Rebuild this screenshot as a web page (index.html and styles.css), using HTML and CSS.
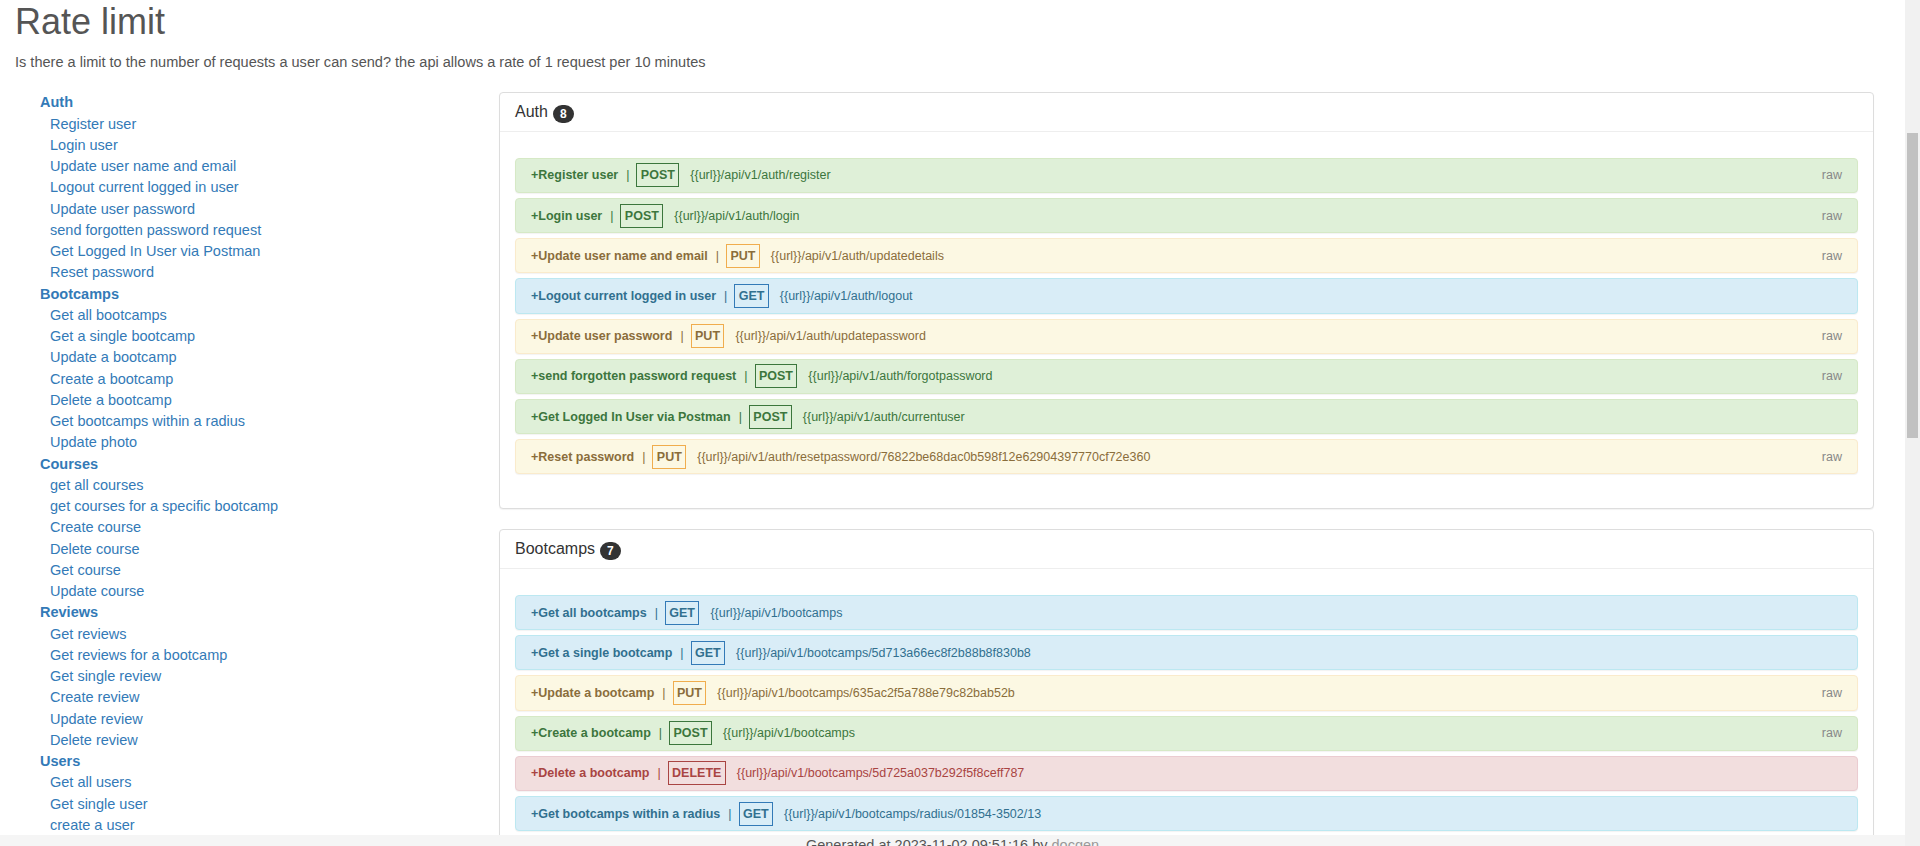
FILE: index.html
```html
<!DOCTYPE html>
<html lang="en">
<head>
<meta charset="utf-8">
<title>Rate limit</title>
<link rel="stylesheet" href="styles.css">
</head>
<body>
<div class="page">
  <h1 class="title">Rate limit</h1>
  <p class="desc">Is there a limit to the number of requests a user can send? the api allows a rate of 1 request per 10 minutes</p>

  <div class="layout">
    <nav class="sidebar">
      <div class="nav-group">
        <a class="nav-title">Auth</a>
        <a class="nav-item">Register user</a>
        <a class="nav-item">Login user</a>
        <a class="nav-item">Update user name and email</a>
        <a class="nav-item">Logout current logged in user</a>
        <a class="nav-item">Update user password</a>
        <a class="nav-item">send forgotten password request</a>
        <a class="nav-item">Get Logged In User via Postman</a>
        <a class="nav-item">Reset password</a>
      </div>
      <div class="nav-group">
        <a class="nav-title">Bootcamps</a>
        <a class="nav-item">Get all bootcamps</a>
        <a class="nav-item">Get a single bootcamp</a>
        <a class="nav-item">Update a bootcamp</a>
        <a class="nav-item">Create a bootcamp</a>
        <a class="nav-item">Delete a bootcamp</a>
        <a class="nav-item">Get bootcamps within a radius</a>
        <a class="nav-item">Update photo</a>
      </div>
      <div class="nav-group">
        <a class="nav-title">Courses</a>
        <a class="nav-item">get all courses</a>
        <a class="nav-item">get courses for a specific bootcamp</a>
        <a class="nav-item">Create course</a>
        <a class="nav-item">Delete course</a>
        <a class="nav-item">Get course</a>
        <a class="nav-item">Update course</a>
      </div>
      <div class="nav-group">
        <a class="nav-title">Reviews</a>
        <a class="nav-item">Get reviews</a>
        <a class="nav-item">Get reviews for a bootcamp</a>
        <a class="nav-item">Get single review</a>
        <a class="nav-item">Create review</a>
        <a class="nav-item">Update review</a>
        <a class="nav-item">Delete review</a>
      </div>
      <div class="nav-group">
        <a class="nav-title">Users</a>
        <a class="nav-item">Get all users</a>
        <a class="nav-item">Get single user</a>
        <a class="nav-item">create a user</a>
        <a class="nav-item">Update user</a>
        <a class="nav-item">Delete user</a>
      </div>
    </nav>

    <main class="main">
      <section class="panel">
        <div class="panel-heading"><h3 class="panel-title">Auth<span class="badge">8</span></h3></div>
        <div class="panel-body">
          <div class="req success"><b>+Register user</b><span class="sep">|</span><span class="method post">POST</span><span class="url">{{url}}/api/v1/auth/register</span><span class="raw">raw</span></div>
          <div class="req success"><b>+Login user</b><span class="sep">|</span><span class="method post">POST</span><span class="url">{{url}}/api/v1/auth/login</span><span class="raw">raw</span></div>
          <div class="req warning"><b>+Update user name and email</b><span class="sep">|</span><span class="method put">PUT</span><span class="url">{{url}}/api/v1/auth/updatedetails</span><span class="raw">raw</span></div>
          <div class="req info"><b>+Logout current logged in user</b><span class="sep">|</span><span class="method get">GET</span><span class="url">{{url}}/api/v1/auth/logout</span></div>
          <div class="req warning"><b>+Update user password</b><span class="sep">|</span><span class="method put">PUT</span><span class="url">{{url}}/api/v1/auth/updatepassword</span><span class="raw">raw</span></div>
          <div class="req success"><b>+send forgotten password request</b><span class="sep">|</span><span class="method post">POST</span><span class="url">{{url}}/api/v1/auth/forgotpassword</span><span class="raw">raw</span></div>
          <div class="req success"><b>+Get Logged In User via Postman</b><span class="sep">|</span><span class="method post">POST</span><span class="url">{{url}}/api/v1/auth/currentuser</span></div>
          <div class="req warning"><b>+Reset password</b><span class="sep">|</span><span class="method put">PUT</span><span class="url">{{url}}/api/v1/auth/resetpassword/76822be68dac0b598f12e62904397770cf72e360</span><span class="raw">raw</span></div>
        </div>
      </section>

      <section class="panel">
        <div class="panel-heading"><h3 class="panel-title">Bootcamps<span class="badge">7</span></h3></div>
        <div class="panel-body">
          <div class="req info"><b>+Get all bootcamps</b><span class="sep">|</span><span class="method get">GET</span><span class="url">{{url}}/api/v1/bootcamps</span></div>
          <div class="req info"><b>+Get a single bootcamp</b><span class="sep">|</span><span class="method get">GET</span><span class="url">{{url}}/api/v1/bootcamps/5d713a66ec8f2b88b8f830b8</span></div>
          <div class="req warning"><b>+Update a bootcamp</b><span class="sep">|</span><span class="method put">PUT</span><span class="url">{{url}}/api/v1/bootcamps/635ac2f5a788e79c82bab52b</span><span class="raw">raw</span></div>
          <div class="req success"><b>+Create a bootcamp</b><span class="sep">|</span><span class="method post">POST</span><span class="url">{{url}}/api/v1/bootcamps</span><span class="raw">raw</span></div>
          <div class="req danger"><b>+Delete a bootcamp</b><span class="sep">|</span><span class="method delete">DELETE</span><span class="url">{{url}}/api/v1/bootcamps/5d725a037b292f5f8ceff787</span></div>
          <div class="req info"><b>+Get bootcamps within a radius</b><span class="sep">|</span><span class="method get">GET</span><span class="url">{{url}}/api/v1/bootcamps/radius/01854-3502/13</span></div>
          <div class="req warning"><b>+Update photo</b><span class="sep">|</span><span class="method put">PUT</span><span class="url">{{url}}/api/v1/bootcamps/5d725a1b7b292f5f8ceff788/photo</span></div>
        </div>
      </section>

      <section class="panel">
        <div class="panel-heading"><h3 class="panel-title">Courses<span class="badge">6</span></h3></div>
        <div class="panel-body">
          <div class="req info"><b>+get all courses</b><span class="sep">|</span><span class="method get">GET</span><span class="url">{{url}}/api/v1/courses</span></div>
          <div class="req info"><b>+get courses for a specific bootcamp</b><span class="sep">|</span><span class="method get">GET</span><span class="url">{{url}}/api/v1/bootcamps/5d725a1b7b292f5f8ceff788/courses</span></div>
          <div class="req success"><b>+Create course</b><span class="sep">|</span><span class="method post">POST</span><span class="url">{{url}}/api/v1/bootcamps/5d725a1b7b292f5f8ceff788/courses</span><span class="raw">raw</span></div>
          <div class="req danger"><b>+Delete course</b><span class="sep">|</span><span class="method delete">DELETE</span><span class="url">{{url}}/api/v1/courses/5d725cb9c4ded7bcb480eaa1</span></div>
          <div class="req info"><b>+Get course</b><span class="sep">|</span><span class="method get">GET</span><span class="url">{{url}}/api/v1/courses/5d725cb9c4ded7bcb480eaa1</span></div>
          <div class="req warning"><b>+Update course</b><span class="sep">|</span><span class="method put">PUT</span><span class="url">{{url}}/api/v1/courses/5d725cb9c4ded7bcb480eaa1</span><span class="raw">raw</span></div>
        </div>
      </section>

      <section class="panel">
        <div class="panel-heading"><h3 class="panel-title">Reviews<span class="badge">6</span></h3></div>
        <div class="panel-body">
          <div class="req info"><b>+Get reviews</b><span class="sep">|</span><span class="method get">GET</span><span class="url">{{url}}/api/v1/reviews</span></div>
          <div class="req info"><b>+Get reviews for a bootcamp</b><span class="sep">|</span><span class="method get">GET</span><span class="url">{{url}}/api/v1/bootcamps/5d725a1b7b292f5f8ceff788/reviews</span></div>
          <div class="req info"><b>+Get single review</b><span class="sep">|</span><span class="method get">GET</span><span class="url">{{url}}/api/v1/reviews/5d7a514b5d2c12c7449be020</span></div>
          <div class="req success"><b>+Create review</b><span class="sep">|</span><span class="method post">POST</span><span class="url">{{url}}/api/v1/bootcamps/5d725a1b7b292f5f8ceff788/reviews</span><span class="raw">raw</span></div>
          <div class="req warning"><b>+Update review</b><span class="sep">|</span><span class="method put">PUT</span><span class="url">{{url}}/api/v1/reviews/5d7a514b5d2c12c7449be020</span><span class="raw">raw</span></div>
          <div class="req danger"><b>+Delete review</b><span class="sep">|</span><span class="method delete">DELETE</span><span class="url">{{url}}/api/v1/reviews/5d7a514b5d2c12c7449be020</span></div>
        </div>
      </section>

      <section class="panel">
        <div class="panel-heading"><h3 class="panel-title">Users<span class="badge">5</span></h3></div>
        <div class="panel-body">
          <div class="req info"><b>+Get all users</b><span class="sep">|</span><span class="method get">GET</span><span class="url">{{url}}/api/v1/users</span></div>
          <div class="req info"><b>+Get single user</b><span class="sep">|</span><span class="method get">GET</span><span class="url">{{url}}/api/v1/users/5c8a1d5b0190b214360dc031</span></div>
          <div class="req success"><b>+create a user</b><span class="sep">|</span><span class="method post">POST</span><span class="url">{{url}}/api/v1/users</span><span class="raw">raw</span></div>
          <div class="req warning"><b>+Update user</b><span class="sep">|</span><span class="method put">PUT</span><span class="url">{{url}}/api/v1/users/5c8a1d5b0190b214360dc031</span><span class="raw">raw</span></div>
          <div class="req danger"><b>+Delete user</b><span class="sep">|</span><span class="method delete">DELETE</span><span class="url">{{url}}/api/v1/users/5c8a1d5b0190b214360dc031</span></div>
        </div>
      </section>
    </main>
  </div>
</div>

<footer class="footer">Generated at 2023-11-02 09:51:16 by <a class="footer-link">docgen</a></footer>

<div class="scrollbar" aria-hidden="true"><div class="scrollbar-thumb"></div></div>
</body>
</html>
```

FILE: styles.css
```css
html, body {
  margin: 0;
  background: #fff;
}

body {
  font-family: "Liberation Sans", Arial, Helvetica, sans-serif;
  font-size: 14.5px;
  line-height: 20.7px;
  color: #333;
}

.page {
  padding: 0 30px 0 15px;
}

.title {
  margin: 2px 0 10px;
  font-size: 36px;
  font-weight: 400;
  line-height: 1.1;
  color: #555;
}

.desc {
  margin: 0;
  font-size: 14.56px;
  color: #555;
}

.layout {
  display: grid;
  grid-template-columns: 484px 1fr;
  margin-top: 20px;
}

.sidebar {
  padding-left: 25px;
}

.nav-group {
  display: flex;
  flex-direction: column;
  align-items: flex-start;
}

.nav-title,
.nav-item {
  color: #337ab7;
  line-height: 21.25px;
  text-decoration: none;
}

.nav-title {
  font-weight: bold;
}

.nav-item {
  padding-left: 10px;
}

.main {
  margin-right: 16px;
  min-width: 0;
}

.panel {
  background: #fff;
  border: 1px solid #ddd;
  border-radius: 4px;
  box-shadow: 0 1px 1px rgba(0, 0, 0, 0.05);
  margin-bottom: 20px;
}

.panel-heading {
  padding: 10px 15px;
  border-bottom: 1px solid #eee;
}

.panel-title {
  display: flex;
  align-items: center;
  height: 17.6px;
  margin: 0;
  font-size: 16px;
  font-weight: 400;
  line-height: 17.6px;
  color: #333;
}

.badge {
  display: inline-block;
  margin: 3px 0 0 5px;
  padding: 3px 7px;
  min-width: 6px;
  font-size: 12px;
  font-weight: bold;
  line-height: 12px;
  color: #fff;
  background: #333;
  border-radius: 10px;
  text-align: center;
}

.panel-body {
  padding: 26px 15px 29px;
}

.req {
  display: flex;
  align-items: center;
  height: 35.2px;
  box-sizing: border-box;
  padding: 0 15px;
  margin-bottom: 5px;
  border: 1px solid;
  border-radius: 4px;
  box-shadow: 0 1px 1px rgba(0, 0, 0, 0.05);
  font-size: 12.5px;
  line-height: 16px;
  white-space: nowrap;
}

.req b {
  font-weight: bold;
}

.sep {
  margin: 0 7px 0 8px;
}

.method {
  display: inline-block;
  height: 24px;
  box-sizing: border-box;
  padding: 0 3.4px;
  border: 1px solid;
  font-weight: bold;
  line-height: 22px;
}

.url {
  margin-left: 11px;
}

.raw {
  margin-left: auto;
  color: #888;
}

.success {
  background: #dff0d8;
  border-color: #d6e9c6;
  color: #3c763d;
}

.warning {
  background: #fcf8e3;
  border-color: #faebcc;
  color: #8a6d3b;
}

.info {
  background: #d9edf7;
  border-color: #bce8f1;
  color: #31708f;
}

.danger {
  background: #f2dede;
  border-color: #ebccd1;
  color: #a94442;
}

.method.post {
  border-color: #3c763d;
}

.method.put {
  border-color: #f0ad4e;
}

.method.get {
  border-color: #337ab7;
}

.method.delete {
  border-color: #a94442;
}

.footer {
  position: fixed;
  left: 0;
  right: 15px;
  top: 835px;
  height: 60px;
  background: #f5f5f5;
  text-align: center;
  font-size: 14.5px;
  line-height: 20px;
  color: #555;
}

.footer-link {
  color: #999;
  text-decoration: none;
}

/* visual stand-in for the browser's vertical scrollbar */
.scrollbar {
  position: fixed;
  top: 0;
  right: 0;
  width: 15px;
  height: 100vh;
  background: #f1f1f1;
}

.scrollbar-thumb {
  position: absolute;
  top: 133px;
  left: 2px;
  width: 11px;
  height: 305px;
  background: #c1c1c1;
}
```
